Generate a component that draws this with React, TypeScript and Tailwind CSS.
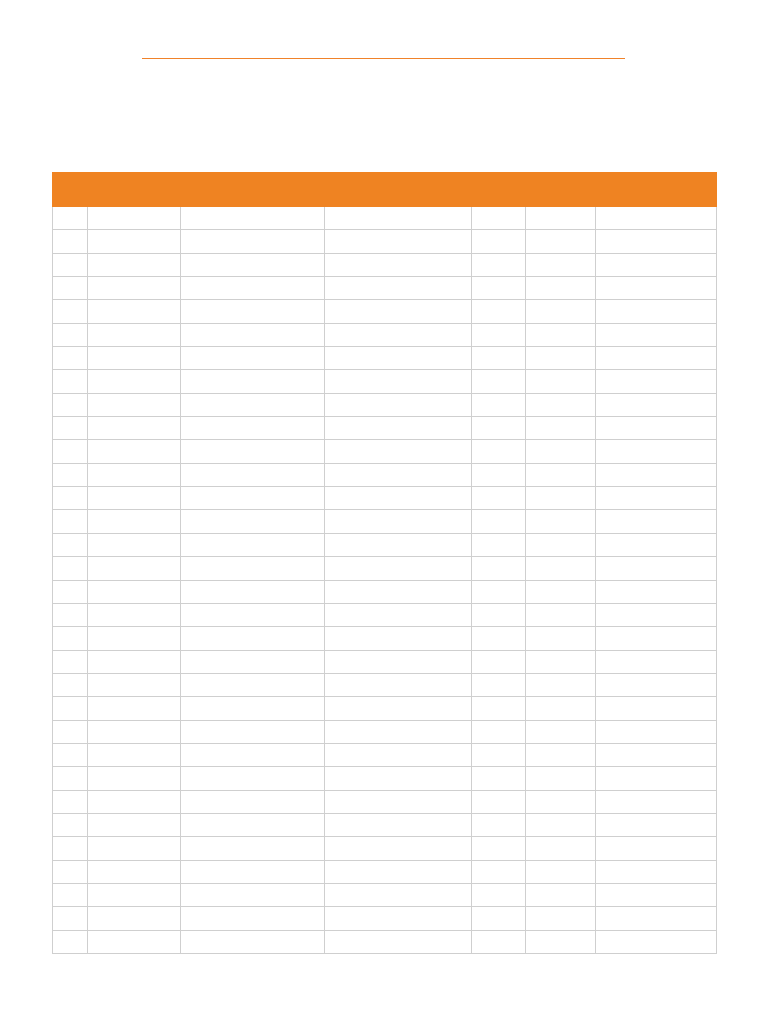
const columns = [
  "w-[35px]",
  "w-[93px]",
  "w-[144px]",
  "w-[147px]",
  "w-[54px]",
  "w-[70px]",
  "w-[121px]",
];

const rows = Array.from({ length: 32 }, (_, i) => i);

export default function App() {
  return (
    <div className="w-[768px] h-[1024px] bg-white font-['Liberation_Sans',sans-serif]">
      <div className="pt-[58px] pl-[142px]">
        <div className="w-[483px] h-px bg-[#f0822a]" />
      </div>

      <div className="mt-[113px] ml-[52px] w-[665px]">
        <div className="h-[35px] bg-[#ef8322]" />
        <div className="border-l border-[#cfcfcf]">
          {rows.map((r) => (
            <div key={r} className="flex h-[23.35px] border-b border-[#cfcfcf]">
              {columns.map((w, c) => (
                <div key={c} className={`${w} h-full border-r border-[#cfcfcf]`} />
              ))}
            </div>
          ))}
        </div>
      </div>
    </div>
  );
}
